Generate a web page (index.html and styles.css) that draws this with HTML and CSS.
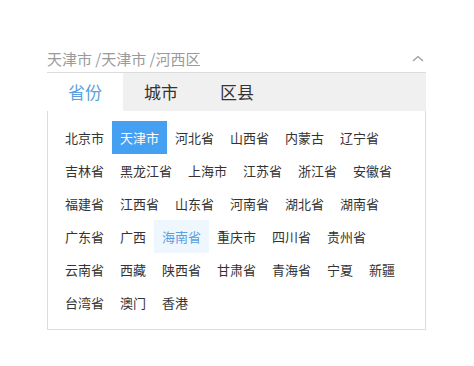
FILE: index.html
```html
<!DOCTYPE html>
<html lang="zh-CN">
<head>
<meta charset="utf-8">
<link rel="stylesheet" href="styles.css">
</head>
<body>
<div class="picker">
  <div class="header">
    <span class="value">天津市 /天津市 /河西区</span>
    <svg class="caret" width="12" height="7" viewBox="0 0 12 7"><path d="M1 6 L6 1.5 L11 6" fill="none" stroke="#9a9a9a" stroke-width="1.2"/></svg>
  </div>
  <div class="tabs">
    <div class="tab active">省份</div>
    <div class="tab">城市</div>
    <div class="tab">区县</div>
  </div>
  <div class="panel">
    <span class="item">北京市</span><span class="item selected">天津市</span><span class="item">河北省</span><span class="item">山西省</span><span class="item">内蒙古</span><span class="item">辽宁省</span>
    <span class="item">吉林省</span><span class="item">黑龙江省</span><span class="item">上海市</span><span class="item">江苏省</span><span class="item">浙江省</span><span class="item">安徽省</span>
    <span class="item">福建省</span><span class="item">江西省</span><span class="item">山东省</span><span class="item">河南省</span><span class="item">湖北省</span><span class="item">湖南省</span>
    <span class="item">广东省</span><span class="item">广西</span><span class="item hover">海南省</span><span class="item">重庆市</span><span class="item">四川省</span><span class="item">贵州省</span>
    <span class="item">云南省</span><span class="item">西藏</span><span class="item">陕西省</span><span class="item">甘肃省</span><span class="item">青海省</span><span class="item">宁夏</span><span class="item">新疆</span>
    <span class="item">台湾省</span><span class="item">澳门</span><span class="item">香港</span>
  </div>
</div>
</body>
</html>
```

FILE: styles.css
```css
html, body {
  margin: 0;
  padding: 0;
  background: #fff;
}
body {
  font-family: "Noto Sans CJK SC", "Noto Sans", sans-serif;
  color: #333;
}
.picker {
  margin: 45px 0 0 47px;
  width: 379px;
}
.header {
  height: 27px;
  border-bottom: 1px solid #dcdcdc;
  display: flex;
  align-items: center;
  justify-content: space-between;
  padding-right: 2px;
}
.value {
  font-size: 15px;
  color: #9a9a9a;
  line-height: 27px;
}
.caret {
  display: block;
  margin-top: -1px;
}
.tabs {
  display: flex;
  height: 38px;
  background: #f0f0f0;
}
.tab {
  width: 76px;
  font-size: 17px;
  line-height: 38px;
  text-align: center;
  color: #333;
}
.tab.active {
  background: #fff;
  color: #5aa0e0;
}
.panel {
  border: 1px solid #dcdcdc;
  border-top: none;
  padding: 10px 9px 10px 9px;
  display: flex;
  flex-wrap: wrap;
}
.item {
  font-size: 13px;
  line-height: 33px;
  height: 33px;
  padding: 0 8px;
  color: #333;
  white-space: nowrap;
}
.item.selected {
  background: #46a0f2;
  color: #fff;
}
.item.hover {
  background: #eef6fe;
  color: #5aa0e0;
}
```
